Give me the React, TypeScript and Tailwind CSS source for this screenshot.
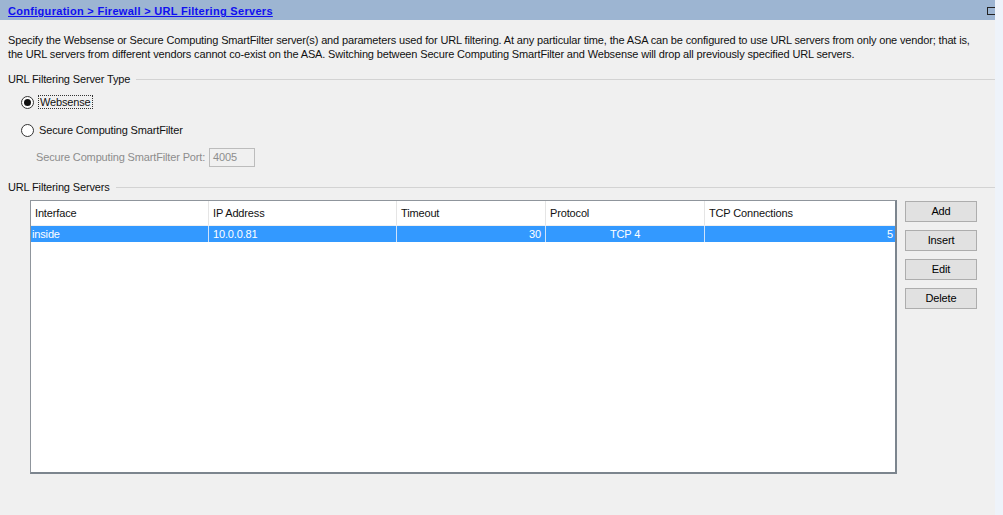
import React from "react";

const columns = [
  { label: "Interface", w: "w-[177px]" },
  { label: "IP Address", w: "w-[188px]" },
  { label: "Timeout", w: "w-[149px]" },
  { label: "Protocol", w: "w-[159px]" },
  { label: "TCP Connections", w: "w-[191px]" },
];

function Radio({ checked }: { checked?: boolean }) {
  return (
    <span className="w-[13px] h-[13px] rounded-full border border-[#333] bg-white flex items-center justify-center shrink-0">
      {checked && <span className="w-[7px] h-[7px] rounded-full bg-[#111]" />}
    </span>
  );
}

function Legend({ label }: { label: string }) {
  return (
    <div className="flex items-center h-[14px] pl-2">
      <span className="whitespace-nowrap">{label}</span>
      <div className="flex-1 ml-[6px] border-t border-[#d3d3d3]" />
    </div>
  );
}

function Button({ label }: { label: string }) {
  return (
    <button className="w-[72px] h-[21px] bg-[#e1e1e1] border border-[#adadad] text-[11px] text-black leading-none">
      {label}
    </button>
  );
}

export default function App() {
  return (
    <div className="w-[1003px] h-[515px] bg-[#f0f0f0] flex text-[11px] tracking-[-0.15px] text-[#111] font-['Liberation_Sans',Arial,sans-serif] overflow-hidden">
      <div className="w-[995px] flex flex-col">
        {/* title bar */}
        <div className="h-[20px] bg-[#9db5d2] flex items-center justify-between pl-2">
          <a className="mt-[3px] font-bold tracking-[0.3px] text-[#1010f0] underline cursor-pointer whitespace-nowrap">
            Configuration &gt; Firewall &gt; URL Filtering Servers
          </a>
          <span className="w-[8px] h-[8px] border-l border-t border-b border-[#222] mt-[2px]" />
        </div>

        {/* description */}
        <div className="mt-[13px] pl-2 leading-[14px] whitespace-nowrap">
          <div>
            Specify the Websense or Secure Computing SmartFilter server(s) and parameters used for URL filtering. At any particular time, the ASA can be configured to use URL servers from only one vendor; that is,
          </div>
          <div>
            the URL servers from different vendors cannot co-exist on the ASA. Switching between Secure Computing SmartFilter and Websense will drop all previously specified URL servers.
          </div>
        </div>

        {/* server type */}
        <div className="mt-[11px]">
          <Legend label="URL Filtering Server Type" />
        </div>
        <div className="mt-[6px] h-[20px] flex items-center pl-[21px] gap-[4px]">
          <Radio checked />
          <span className="px-[1px] border border-dotted border-[#333] leading-[12px]">Websense</span>
        </div>
        <div className="mt-[8px] h-[20px] flex items-center pl-[21px] gap-[5px]">
          <Radio />
          <span>Secure Computing SmartFilter</span>
        </div>
        <div className="mt-[8px] h-[19px] flex items-center pl-[36px]">
          <span className="text-[#8d8d8d] w-[173px] whitespace-nowrap">Secure Computing SmartFilter Port:</span>
          <div className="w-[46px] h-[19px] border border-[#bcbcbc] bg-[#f0f0f0] text-[#8d8d8d] flex items-center pl-[3px]">
            4005
          </div>
        </div>

        {/* servers */}
        <div className="mt-[13px]">
          <Legend label="URL Filtering Servers" />
        </div>
        <div className="mt-[6px] flex pl-[30px]">
          <div className="w-[867px] h-[274px] bg-white border-l border-t border-[#8f959c] border-r-2 border-b-2 border-r-[#7c858e] border-b-[#7c858e] flex flex-col">
            <div className="h-[25px] flex border-b border-[#f0f0f0]">
              {columns.map((c, i) => (
                <div
                  key={c.label}
                  className={`${c.w} flex items-center pl-[4px] pt-[1px] ${i > 0 ? "border-l border-[#e5e5e5]" : ""}`}
                >
                  {c.label}
                </div>
              ))}
            </div>
            <div className="h-[16px] flex bg-[#3399ff] text-white">
              <div className="w-[177px] flex items-center pl-[1px]">inside</div>
              <div className="w-[188px] flex items-center pl-[4px] border-l border-[#cfe3fb]">10.0.0.81</div>
              <div className="w-[149px] flex items-center justify-end pr-[4px] border-l border-[#cfe3fb]">30</div>
              <div className="w-[159px] flex items-center justify-center border-l border-[#cfe3fb]">TCP 4</div>
              <div className="w-[191px] flex items-center justify-end pr-[2px] border-l border-[#cfe3fb]">5</div>
            </div>
          </div>
          <div className="ml-[8px] mt-[1px] flex flex-col gap-[8px]">
            <Button label="Add" />
            <Button label="Insert" />
            <Button label="Edit" />
            <Button label="Delete" />
          </div>
        </div>
      </div>
      <div className="flex-1 bg-[#eef3fa]" />
    </div>
  );
}
